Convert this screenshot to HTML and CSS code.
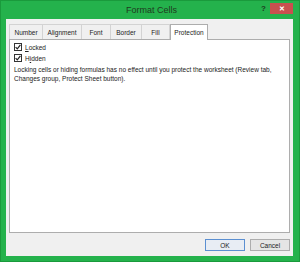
FILE: index.html
```html
<!DOCTYPE html>
<html lang="en">
<head>
    <meta charset="UTF-8">
    <title>Format Cells</title>
    <link rel="stylesheet" href="styles.css">
</head>
<body>
    <div class="window">
        <div class="titlebar">
            <span class="title">Format Cells</span>
            <span class="help">?</span>
            <span class="close">&#x2715;</span>
        </div>
        <div class="client">
            <div class="tabs">
                <span class="tab t-number">Number</span>
                <span class="tab t-align">Alignment</span>
                <span class="tab t-font">Font</span>
                <span class="tab t-border">Border</span>
                <span class="tab t-fill">Fill</span>
                <span class="tab active">Protection</span>
            </div>
            <div class="panel">
                <label class="check">
                    <span class="box"><svg width="6" height="6" viewBox="0 0 6 6"><path d="M0.6 3.1 L2.3 4.9 L5.4 0.8" fill="none" stroke="#222" stroke-width="1.2"/></svg></span>
                    <span><u>L</u>ocked</span>
                </label>
                <label class="check">
                    <span class="box"><svg width="6" height="6" viewBox="0 0 6 6"><path d="M0.6 3.1 L2.3 4.9 L5.4 0.8" fill="none" stroke="#222" stroke-width="1.2"/></svg></span>
                    <span>H<u>i</u>dden</span>
                </label>
                <p class="note">Locking cells or hiding formulas has no effect until you protect the worksheet (Review tab, Changes group, Protect Sheet button).</p>
            </div>
            <div class="footer">
                <button class="btn default">OK</button>
                <button class="btn">Cancel</button>
            </div>
        </div>
    </div>
</body>
</html>
```

FILE: styles.css
```css
* {
    box-sizing: border-box;
}
body {
    margin: 0;
    font-family: "Liberation Sans", Arial, sans-serif;
}
.window {
    width: 300px;
    height: 262px;
    background: #24b24c;
    border: 1px solid #1a9a3c;
    padding: 0 6px 5px 5px;
    display: flex;
    flex-direction: column;
}
.titlebar {
    height: 18px;
    position: relative;
    display: flex;
    align-items: center;
    justify-content: center;

    .title {
        font-size: 9px;
        color: #203a20;
        margin-left: 4px;
    }
    .help {
        position: absolute;
        right: 27px;
        top: 3px;
        font-size: 8px;
        font-weight: bold;
        color: #1e3a1e;
    }
    .close {
        position: absolute;
        right: 0;
        top: 2px;
        width: 23px;
        height: 11px;
        background: #c9504f;
        color: #fff;
        font-size: 7px;
        font-weight: bold;
        display: flex;
        align-items: center;
        justify-content: center;
    }
}
.client {
    flex: 1;
    background: #f0f0f0;
    padding: 4px 3px 5px 3px;
    display: flex;
    flex-direction: column;
}
.tabs {
    display: flex;
    align-items: flex-end;
    height: 16px;
    padding-left: 0;

    .tab {
        height: 15px;
        border: 1px solid #d3d3d3;
        border-bottom: none;
        margin-right: -1px;
        background: #f0f0f0;
        font-size: 6.5px;
        color: #222;
        display: flex;
        align-items: center;
        justify-content: center;
    }
    .t-number { width: 34px; }
    .t-align { width: 40px; }
    .t-font { width: 30px; }
    .t-border { width: 32px; }
    .t-fill { width: 29px; }
    .active {
        width: 38px;
        height: 16px;
        margin-left: 1px;
        background: #fff;
        border-color: #adadad;
        position: relative;
        top: 1px;
    }
}
.panel {
    flex: 1;
    background: #fff;
    border: 1px solid #adadad;
    padding: 1px 4px;
    font-size: 6.5px;
    color: #222;
}
.check {
    display: flex;
    align-items: center;
    gap: 3px;
    height: 10px;
    margin-top: 1px;

    .box {
        width: 8px;
        height: 8px;
        border: 1px solid #333;
        background: #fff;
        display: flex;
        align-items: center;
        justify-content: center;
    }
}
.note {
    margin: 2px 0 0 0;
    line-height: 9px;
}
.footer {
    height: 18px;
    display: flex;
    justify-content: flex-end;
    align-items: flex-end;
    gap: 5px;

    .btn {
        width: 40px;
        height: 12px;
        padding: 0;
        border: 1px solid #adadad;
        background: #e5e5e5;
        font-family: "Liberation Sans", Arial, sans-serif;
        font-size: 6.5px;
        color: #222;
    }
    .default {
        border-color: #5b8fd1;
        background: #e8edf4;
    }
}
```
